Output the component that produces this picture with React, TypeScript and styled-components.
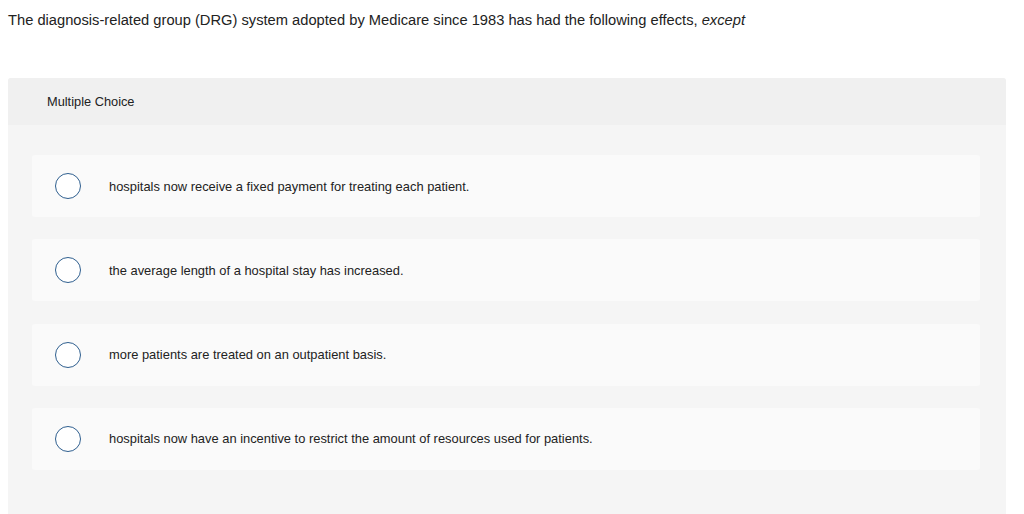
import React from 'react';
import styled, { createGlobalStyle } from 'styled-components';

const GlobalStyle = createGlobalStyle`
    body {
        margin: 0;
        background: #ffffff;
        font-family: "Liberation Sans", Arial, sans-serif;
        color: #222222;
    }
`;

const Page = styled.div`
    padding: 11px 8px 0 8px;
    width: 998px;
`;

const Question = styled.p`
    margin: 0 0 49px 0;
    font-size: 14.7px;
    line-height: 18px;
    color: #222;

    em {
        font-style: italic;
    }
`;

const Panel = styled.div`
    background: #f5f5f5;
    border-radius: 3px 3px 0 0;
    height: 436px;
    overflow: hidden;
`;

const PanelHeader = styled.div`
    display: flex;
    align-items: center;
    height: 47px;
    padding-left: 39px;
    background: #f0f0f0;
    font-size: 12.8px;
    color: #222;
`;

const OptionList = styled.div`
    display: flex;
    flex-direction: column;
    gap: 22.3px;
    padding: 30px 26px 0 24px;
`;

const Option = styled.label`
    display: flex;
    align-items: center;
    height: 62px;
    padding-left: 23px;
    background: #fafafa;
    border-radius: 3px;
    font-size: 12.9px;
    color: #222;
    cursor: pointer;
`;

const Radio = styled.span`
    width: 24px;
    height: 24px;
    flex-shrink: 0;
    border: 1px solid #2f5f8f;
    border-radius: 50%;
    background: #fff;
    margin-right: 28px;
`;

const options = [
    'hospitals now receive a fixed payment for treating each patient.',
    'the average length of a hospital stay has increased.',
    'more patients are treated on an outpatient basis.',
    'hospitals now have an incentive to restrict the amount of resources used for patients.',
];

const App = () => {
    return (
        <Page>
            <GlobalStyle />
            <Question>
                The diagnosis-related group (DRG) system adopted by Medicare since 1983 has had the following effects, <em>except</em>
            </Question>
            <Panel>
                <PanelHeader>Multiple Choice</PanelHeader>
                <OptionList>
                    {options.map(text => (
                        <Option key={text}>
                            <Radio />
                            {text}
                        </Option>
                    ))}
                </OptionList>
            </Panel>
        </Page>
    );
};

export default App;
